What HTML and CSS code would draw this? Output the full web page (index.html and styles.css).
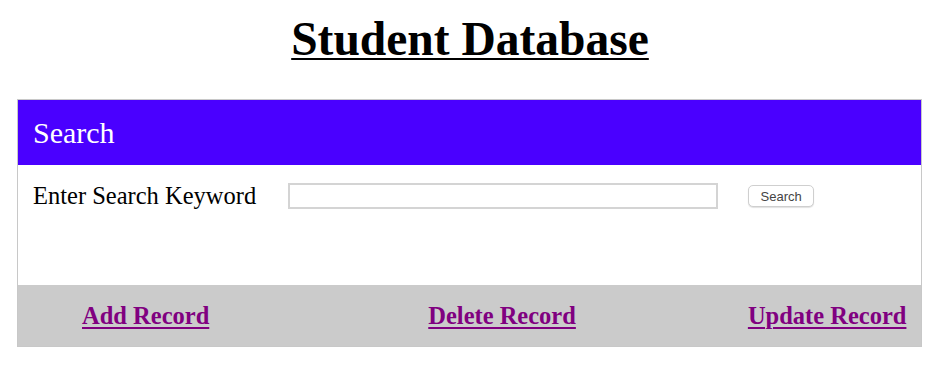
FILE: index.html
```html
<!DOCTYPE html>
<html>
<head>
<meta charset="utf-8">
<title>Student Database</title>
<link rel="stylesheet" href="styles.css">
</head>
<body>
<h1 class="title">Student Database</h1>
<div class="panel">
  <div class="panel-head">Search</div>
  <div class="panel-body">
    <label class="search-label" for="kw">Enter Search Keyword</label>
    <input class="search-input" id="kw" type="text">
    <button class="search-btn" type="button">Search</button>
  </div>
  <div class="panel-foot">
    <a class="foot-link link-add" href="#">Add Record</a>
    <a class="foot-link link-del" href="#">Delete Record</a>
    <a class="foot-link link-upd" href="#">Update Record</a>
  </div>
</div>
</body>
</html>
```

FILE: styles.css
```css
html, body {
  margin: 0;
  padding: 0;
  background: #ffffff;
}
body {
  font-family: "Liberation Serif", "Times New Roman", serif;
  color: #000;
  padding: 0 17px 0 17px;
}
.title {
  margin: 0;
  padding-top: 12px;
  height: 99px;
  box-sizing: border-box;
  text-align: center;
  font-size: 47.5px;
  font-weight: bold;
  line-height: 55px;
  text-decoration: underline;
  text-decoration-thickness: 2px;
  text-underline-offset: 3px;
}
.panel {
  width: 905px;
  border: 1px solid #c8c8c8;
  box-sizing: border-box;
}
.panel-head {
  background: #4a00ff;
  color: #fff;
  height: 65px;
  font-size: 30px;
  padding-left: 15px;
  display: flex;
  align-items: center;
}
.panel-body {
  height: 120px;
  display: flex;
  align-items: flex-start;
  padding: 18px 0 0 15px;
  box-sizing: border-box;
}
.search-label {
  font-size: 24.5px;
  line-height: 26px;
  margin-right: 32px;
  margin-top: 0;
}
.search-input {
  width: 430px;
  height: 26px;
  box-sizing: border-box;
  border: 2px solid #d4d4d4;
  border-radius: 0;
  margin: 0 30px 0 0;
  padding: 0;
  background: #fff;
}
.search-btn {
  margin-top: 2px;
  height: 22px;
  width: 66px;
  box-sizing: border-box;
  border: 1px solid #cfcfcf;
  border-radius: 5px;
  background: #fff;
  font-family: "Liberation Sans", Arial, sans-serif;
  font-size: 13px;
  color: #444;
  padding: 0;
  box-shadow: 0 1px 1px rgba(0,0,0,0.12);
}
.panel-foot {
  background: #cbcbcb;
  height: 61px;
  display: flex;
  align-items: center;
  padding-left: 64px;
}
.foot-link {
  color: #800080;
  font-weight: bold;
  font-size: 24.5px;
  text-decoration: underline;
  text-decoration-thickness: 2px;
  text-underline-offset: 3px;
}
.link-del {
  margin-left: 219px;
}
.link-upd {
  margin-left: 172px;
}
```
